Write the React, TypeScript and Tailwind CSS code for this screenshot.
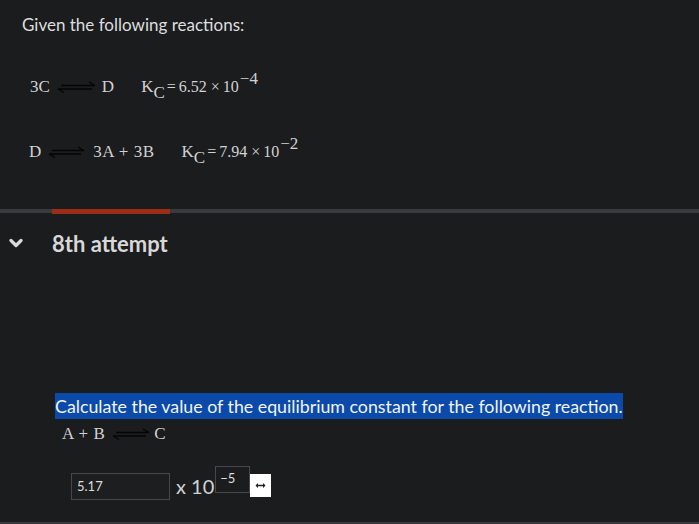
function Eq({ w = 36 }: { w?: number }) {
  return (
    <svg width={w} height="12" viewBox={`0 0 ${w} 12`} className="shrink-0">
      <path d={`M4 4.5 H${w - 1} M${w - 1} 4.5 L${w - 7} 1`} stroke="#050505" strokeWidth="1.3" fill="none" />
      <path d={`M${w - 4} 8 H1 M1 8 L7 11.5`} stroke="#050505" strokeWidth="1.3" fill="none" />
    </svg>
  )
}

function Kc({ value, exp }: { value: string; exp: string }) {
  return (
    <span className="flex items-center">
      K<span className="relative top-[6px] text-[17px]">C</span>
      <span className="ml-[2px] text-[16px]">=</span>
      <span className="ml-[3px] text-[16px]">{value}</span>
      <span className="ml-[4px] text-[16px]">×</span>
      <span className="ml-[3px] text-[16px]">10</span>
      <span className="relative -top-[8px] ml-[1px] text-[17px]">{exp}</span>
    </span>
  )
}

export default function App() {
  return (
    <div className="min-h-screen bg-[#1b1c1e] font-['Lato',sans-serif] overflow-hidden">
      <div className="px-[22px] pt-[13px] text-[17px] leading-6 text-[#dedede]">Given the following reactions:</div>

      <div className="mt-[38px] ml-[30px] flex h-6 items-center font-['Liberation_Serif',serif] text-[17px] text-[#d2d2d2]">
        <span>3C</span>
        <span className="ml-[7px]">
          <Eq w={39} />
        </span>
        <span className="ml-[6px]">D</span>
        <span className="ml-[27px]">
          <Kc value="6.52" exp="−4" />
        </span>
      </div>

      <div className="mt-[41px] ml-[29px] flex h-6 items-center font-['Liberation_Serif',serif] text-[17px] text-[#d2d2d2]">
        <span>D</span>
        <span className="ml-[7px]">
          <Eq w={37} />
        </span>
        <span className="ml-[8px] tracking-[0.5px]">3A + 3B</span>
        <span className="ml-[27px]">
          <Kc value="7.94" exp="−2" />
        </span>
      </div>

      <div className="mt-[45px] flex h-[4px] bg-[#393a3d]">
        <div className="ml-[52px] h-[5px] w-[118px] bg-[#9b2c15]" />
      </div>

      <div className="mt-[17px] flex h-[26px] items-center">
        <svg width="14" height="10" viewBox="0 0 14 10" className="ml-[9px]">
          <path d="M2 2.5 L7 7.5 L12 2.5" stroke="#dadada" strokeWidth="3.2" fill="none" strokeLinecap="round" strokeLinejoin="round" />
        </svg>
        <span className="ml-[29px] text-[22px] font-bold text-[#d8d8d8]">8th attempt</span>
      </div>

      <div className="mt-[138px] ml-[55px] text-[17.8px] leading-[25px] text-[#f2f4f8]">
        <span className="bg-[#0b4aa8] py-[2px]">Calculate the value of the equilibrium constant for the following reaction.</span>
      </div>

      <div className="mt-[3px] ml-[62px] flex h-6 items-center font-['Liberation_Serif',serif] text-[17px] text-[#d2d2d2]">
        <span className="tracking-[0.5px]">A + B</span>
        <span className="ml-[7px]">
          <Eq w={38} />
        </span>
        <span className="ml-[4px]">C</span>
      </div>

      <div className="mt-[20px] ml-[71px] flex items-start">
        <div className="mt-[7px] flex h-[27px] w-[99px] items-center border border-[#47484b] bg-[#1d1e20] pl-[5px] text-[13px] text-[#dcdcdc]">
          5.17
        </div>
        <span className="ml-[6px] mt-[7px] text-[20px] leading-[27px] text-[#d0d2d4]">x 10</span>
        <div className="ml-[1px] h-[27px] w-[35px] border border-[#47484b] pl-[4px] text-[13px] leading-[22px] text-[#dcdcdc]">
          −5
        </div>
        <div className="mt-[8px] flex h-[23px] w-[21px] items-center justify-center bg-white">
          <svg width="11" height="7" viewBox="0 0 11 7">
            <path d="M1.5 3.5 H9.5" stroke="#222" strokeWidth="1.5" />
            <path d="M0.5 3.5 L3 1 V6 Z M10.5 3.5 L8 1 V6 Z" fill="#222" />
          </svg>
        </div>
      </div>

      <div className="mt-[22px] h-[3px] bg-[#393a3d]" />
    </div>
  )
}
